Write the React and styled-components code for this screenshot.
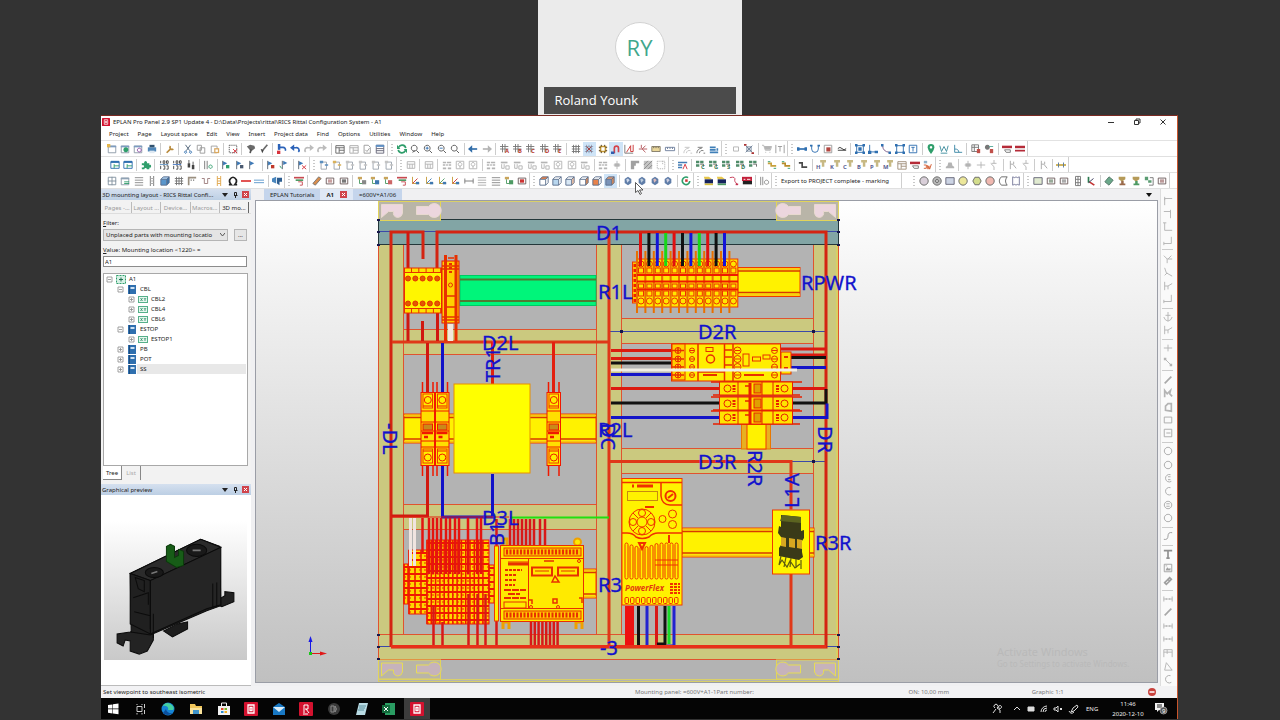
import React, { useState } from "react";
import styled, { createGlobalStyle } from "styled-components";

const RED = "#d8323c";
const BLUE = "#2f6fb0";
const GREEN = "#2f9e6b";
const GRAY = "#b4b4b4";
const DARK = "#4a4a4a";

// Toolbar glyphs on a 12x12 grid: [kind, colour, path] with s = stroke, f = fill, t = letter
const page = (c) => [["s", "#8d99a6", "M1.5 2.5h9v8h-9z"], ["f", c || "#8d99a6", "M1 2h10v2h-10z"]];
const flag = (c) => [["s", "#56616e", "M2 1v10"], ["f", "#3d78b5", "M2.5 1.5l5 2.5l-5 2.5z"], ["f", c || "#4a5a70", "M6 6h4v4h-4z"]];
const hash = (c) => [["s", c || "#777", "M3 1v10M6 1v10M9 1v10M1 3h10M1 6h10M1 9h10"]];
const cube = (top, front, side) => [
  ["f", top || "#fff", "M1 4l3-3h7l-3 3z"],
  ["f", front || "#fff", "M1 4h7v7h-7z"],
  ["f", side || "#fff", "M8 4l3-3v7l-3 3z"],
  ["s", "#5a6f8c", "M1 4l3-3h7v7l-3 3h-7zM1 4h7v7M8 4l3-3"],
];
const lens = "M5 1.5a3.5 3.5 0 1 0 .1 0zM7.6 7.6l3.2 3.2";

const GLYPHS = {
  page,
  star: () => [...page("#7d9cc0"), ["f", "#e5b64c", "M0 0h4v4h-4z"]],
  open: () => [...page("#7d9cc0"), ["f", GREEN, "M7 4a3 3 0 1 0 .1 0z"]],
  close: () => [...page("#7d9cc0"), ["s", "#8e4fa8", "M7.5 5a2.3 2.3 0 1 0 .1 0z"]],
  printer: () => [["f", "#4f86b8", "M1 4h10v5h-10z"], ["f", "#dfe9f2", "M3 8h6v3h-6z"], ["f", "#31526f", "M3 1h6v3h-6z"]],
  wrench: () => [["s2", "#b88a3c", "M2 10.5l5-5"], ["s2", "#b88a3c", "M6.5 2.5a2.5 2.5 0 0 0 3.5 3.5"]],
  cut: () => [["s", "#4b5f74", "M3 1l5 7M9 1l-5 7"], ["s", BLUE, "M3 8.5a1.3 1.3 0 1 0 .1 0zM9 8.5a1.3 1.3 0 1 0 .1 0z"]],
  copy: (c) => [["s", c || "#9a9a9a", "M1.5 1.5h5v6h-5zM5 4.5h5.5v6.5h-5.5z"]],
  paste: () => [["s", "#a0a0a0", "M1.5 2.5h7v8h-7z"], ["f", "#d9a860", "M5 5h6v6h-6z"], ["f", "#fff", "M6.5 6.5h3v3h-3z"]],
  del: () => [["d", "#555", "M1.5 1.5h9v9h-9z"], ["s", RED, "M6 6l5 5M11 6l-5 5"]],
  brush: () => [["f", "#6a6a6a", "M1 3l4-2l5 1l1 3l-5 4z"], ["s2", "#555", "M6 6l-1 5"]],
  brush2: () => [["s2", "#6a6a6a", "M10 1l-5 6"], ["f", "#444", "M2 6l4 1l-2 4z"]],
  undo: (c) => [["s2", c || "#2b62b8", "M3 4.5h4a3 3 0 0 1 3 5"], ["f", c || "#2b62b8", "M0 4.5l5-4v8z"]],
  undoStart: () => [["s2", "#2b62b8", "M3 4h4a3 3 0 0 1 3 4"], ["f", "#2b62b8", "M1 0h3v7h-3z"], ["f", RED, "M0 8h4v4h-4z"]],
  redo: () => [["s2", "#bcbcbc", "M9 4.5h-4a3 3 0 0 0-3 5"], ["f", "#bcbcbc", "M12 4.5l-5-4v8z"]],
  window: (c) => [["s", c || "#666", "M1 2h10v9h-10zM1 4.5h10M5 4.5v6M5 7.5h6"]],
  doc: (c) => [["s", c || "#9a9a9a", "M2.5 1.5h5l2.5 2.5v7h-7.5zM4 7l2 2l3-4"]],
  list: (c) => [["s", c || "#667", "M1.5 1.5h9v9.5h-9zM1.5 5.5h9M1.5 8h9"], ["f", "#5f8fc4", "M1 1h10v2.5h-10z"]],
  refresh: () => [["s2", GREEN, "M10.5 5a4.5 4.5 0 0 0-8.5-1M1.5 7a4.5 4.5 0 0 0 8.5 1"], ["f", GREEN, "M0 1v5h4zM12 11v-5h-4z"]],
  lens: () => [["s", "#555", lens]],
  lensHand: () => [["s", "#555", lens], ["s", "#555", "M3 10l3-2"]],
  lensPlus: () => [["s", "#555", lens], ["s", BLUE, "M3.2 5h3.6M5 3.2v3.6"]],
  lensMinus: () => [["s", "#555", lens], ["s", BLUE, "M3.2 5h3.6"]],
  back: () => [["s2", "#336ea9", "M3 6h8"], ["f", "#336ea9", "M0 6l5-4.5v9z"]],
  next: () => [["s2", GRAY, "M1 6h8"], ["f", GRAY, "M12 6l-5-4.5v9z"]],
  grid: (l) => [["s", "#777", "M3 0v10M6 0v10M0 3h10M0 6h10"], ["t", "#b9352b", l]],
  hash,
  snap: () => [...hash("#8fa3bb"), ["s", "#a33a3a", "M3 3l6 6M9 3l-6 6"]],
  orangeGrid: () => [["s2", "#c79a35", "M3 3h6v6h-6z"], ["s", "#4a3a20", "M1 4h2M9 4h2M1 8h2M9 8h2M4 1v2M8 1v2M4 9v2M8 9v2"]],
  magnet: () => [["s2", "#d5424a", "M4 11v-6a2.5 2.5 0 0 1 5 0v5"], ["f", "#2f5fae", "M0 9h4v3h-4z"]],
  magnetLine: () => [["s", "#777", "M1 1v10h10"], ["s", "#c33", "M3 10l5-8v7h3v-8"]],
  branch: () => [["s", "#b3555a", "M1 6h10M5 6l4-4M5 6l4 4M4 1v4"]],
  ruler: (c) => [["f", c || "#ead79a", "M1 3h10v6h-10z"], ["s", "#827b68", "M1 3h10v6h-10zM3 3v2M5 3v2M7 3v2M9 3v2"]],
  ruler2: () => [["s", "#6d7f9c", "M.5 4h11v4h-11zM3 4v2M6 4v2M9 4v2"]],
  signal: (c) => [["s", c || "#c4c4c4", "M1 11a6 6 0 0 1 6-6M4 11a4 4 0 0 1 5-3M2 4h6M9 11h2"]],
  tableBlue: () => [["f", "#3f7fb8", "M1 3h7v2h-7zM1 6h7v2h-7zM1 9h10v2h-10zM9 5h2v3h-2z"]],
  box: (c) => [["s", c || GRAY, "M3 3.5h6v5h-6z"]],
  nodes: () => [["s", "#6b7f96", "M2 2l8 8M10 2l-8 8M3.5 3.5h5v5h-5z"], ["f", "#a33", "M0 0h3v2h-3zM9 10h3v2h-3z"]],
  cart: () => [["s", GRAY, "M0 1.5h2l2 6h6l1.5-4.5h-9M4 10h1M9 10h1"], ["f", GRAY, "M3 3h8l-1 4h-6z"]],
  text: (c) => [["s", c || "#999", "M1 1v10M11 1v10M3.5 3h5M6 3v6"]],
  line: () => [["s2", BLUE, "M1 6h10"], ["f", BLUE, "M0 4h3v4h-3zM9 4h3v4h-3z"]],
  bend: () => [["s", BLUE, "M2 2v4a4 4 0 0 0 8 0v-4"], ["f", BLUE, "M0 1h3v2h-3zM9 1h3v2h-3z"]],
  redFrame: () => [["s", "#999", "M1.5 1.5h9v9h-9z"], ["f", "#b3453f", "M4 4h5v5h-5z"]],
  wave: () => [["s", "#333", "M1 5.5q2.5-3 5 0t5 0M1 7.5h10"]],
  frame: () => [["s", BLUE, "M2 2h8v8h-8z"], ["f", BLUE, "M0 0h3v3h-3zM9 0h3v3h-3zM0 9h3v3h-3zM9 9h3v3h-3zM4 4h4v4h-4z"]],
  corner: () => [["s", BLUE, "M2 1v8.5h9"], ["f", BLUE, "M0 8h4v4h-4zM8 8h4v3h-4z"]],
  curve: () => [["s", "#7a5a88", "M2 2q0 7 8 8"], ["f", BLUE, "M0 0h3v3h-3zM9 9h3v3h-3z"]],
  square: () => [["s", BLUE, "M2 2h8v8h-8z"], ["f", BLUE, "M0 0h3v3h-3zM9 0h3v3h-3zM0 9h3v3h-3zM9 9h3v3h-3z"]],
  textFrame: () => [["s", BLUE, "M1.5 1.5h9v9h-9zM4 4h4M6 4v5"]],
  pin: () => [["f", GREEN, "M6 0a4 4 0 0 1 4 4q0 3-4 8q-4-5-4-8a4 4 0 0 1 4-4z"], ["f", "#fff", "M6 2.5a1.5 1.5 0 1 0 .1 0z"]],
  omegaBlue: () => [["s", "#3d8c9c", "M1 2l2 7l3-6l3 6l2-7M2 11h8"]],
  angle: () => [["s", "#3b87a5", "M2 1v9h9M2 6q5 0 5 4"]],
  gridDoc: () => [["s", "#777", "M1 1h8v8h-8zM4 1v8M1 4h8"], ["f", "#c0504a", "M7 6h4v5h-4z"]],
  gearDoc: () => [["f", "#777", "M4 1a3 3 0 1 0 .1 0z"], ["f", "#c0504a", "M7 6h4v5h-4z"], ["s", "#5a9", "M6 3h5"]],
  redBars: () => [["f", "#b52b38", "M0 2h12v3h-12z"], ["s", "#777", "M3 7h7v3h-5z"]],
  redFlag: () => [["f", "#b52b38", "M0 2h12v3h-12zM0 7h12v2h-12z"], ["f", "#e9dada", "M0 5h12v2h-12z"]],
  winArrow: () => [["s", BLUE, "M1 2h10v8h-10z"], ["f", BLUE, "M1 1h10v2.5h-10z"], ["s", GREEN, "M5 7h6M5 5v5"]],
  puzzle: () => [["f", GREEN, "M1 4h3a1.8 1.8 0 1 1 3 0h3v2a1.6 1.6 0 1 1 0 3v2h-3a1.5 1.5 0 1 0-3 0h-3v-2.5a1.5 1.5 0 1 0 0-2z"]],
  digits: (c) => [["s", "#444", "M2 1v3M5 1h2v3h-2zM9 1h2v3h-2zM2 7v4M5 7h2v4h-2M9 7h2v4h-2"], ["f", c || "#5a8fc0", "M1 5h10v1h-10z"]],
  plugs: () => [["s", "#555", "M3.5 0v4M8.5 2v4"], ["f", "#444", "M2 4h3v5h-3zM7 6h3v5h-3z"]],
  barsDot: () => [["s", "#777", "M2 1v10M5 1v10"], ["s", GREEN, "M9 6a2 2 0 1 0 .1 0z"]],
  flag,
  flagCheck: () => [["s", "#56616e", "M4 1v10"], ["f", "#3d78b5", "M5 1l5 2.5l-5 2.5z"], ["s", GREEN, "M1 7l2 3"]],
  flagX: () => [["s", "#56616e", "M2 1v10"], ["f", "#3d78b5", "M2.5 1.5l5 2.5l-5 2.5z"], ["s", RED, "M6 6.5l5 4.5M11 6.5l-5 4.5"]],
  sheet: (c) => [["s", "#9aa3ad", "M2.5 2.5h6.5v8.5h-6.5z"], ["f", c || "#c4c4c4", "M1 1h4v3h-4zM7 5h4v2h-4z"]],
  grayTable: () => [["s", GRAY, "M1.5 2h9v8h-9zM1.5 5h9M4.5 5v5M7.5 5v5"]],
  grayBlocks: () => [["f", GRAY, "M1 2h4v2h-4zM6 2h5v2h-5zM1 5h3v2h-3zM5 5h2v2h-2zM8 5h3v2h-3zM1 9h4v2h-4zM7 9h4v2h-4z"]],
  grayTag: () => [["f", GRAY, "M1 2h8v2h-8z"], ["s", GRAY, "M2 5v5h3v-5M7 7h4v4h-4z"]],
  grayLamp: () => [["s", GRAY, "M1.5 1.5h9v9h-9zM6 3a2.2 2.2 0 1 0 .1 0zM6 7v3"]],
  grayHatch: () => [["f", "#c4c4c4", "M1 1h10v10h-10z"], ["s", "#8a8a8a", "M1 6l5-5M1 11l10-10M6 11l5-5"]],
  grayCorner: () => [["f", "#a0a0a0", "M1 1h10v3h-4v3h-2v4h-4z"]],
  grayPlus: () => [["s", GRAY, "M6 1v10M2 6h8"], ["f", GRAY, "M3 4h6v4h-6z"]],
  grayDash: () => [["d", GRAY, "M1.5 1.5h9v9h-9zM8 1v4"]],
  tableA: () => [["f", "#447db5", "M0 2h11v2h-11zM0 5h5v2h-5zM0 8h5v2h-5z"], ["s", RED, "M6 11l2.5-6l2.5 6"]],
  greenTable: (l) => [["f", "#508c6a", "M0 1h4v3h-4zM5 1h4v3h-4zM0 5h4v3h-4z"], ["s", "#666", "M5 5h4v3"], ["t", "#3b7d58", l]],
  wire: (c) => [["s2", c || "#c7a13d", "M1 4h4v3h6"], ["s", GREEN, "M1 2h3M8 10h3"]],
  step: () => [["s2", DARK, "M1 3.5h4v5h6"]],
  funnel: (l) => [["f", "#c7b984", "M5 0h7v3h-2v5h-3v-5h-2z"], ["t2", "#5b5f92", l]],
  sw: () => [["f", "#8fb0c8", "M1 1h4v3h-4z"], ["s", "#d25b2f", "M1 6h3v4h-3M5 6l1 5l1-4l1 4l2-6"]],
  hat: () => [["f", GRAY, "M1 8l2-1l1-4h4l1 4l2 1v2h-10z"]],
  contact: () => [["s", GRAY, "M6 0v4M6 8v4M3 4h6M6 8l-4-4"]],
  relay: () => [["s", "#a6a6a6", "M4 1v10M4 5h3l4 5M8 2v3"]],
  yellowBar: () => [["s2", "#c7a640", "M0 6h12"], ["s", "#56789c", "M3 3v6M9 3v6"]],
  frameGrid: () => [["s", "#81909e", "M1.5 1.5h9v9h-9zM6 1v10M1 6h10"]],
  greenList: () => [...page("#8fa2b4"), ["s", GREEN, "M5 7h6M5 9h6"]],
  rows: (c) => [["s", c || "#8a8a8a", "M1 2h10M1 5h10M1 8h10M1 11h10"]],
  rack: (c) => [["s", c || "#777", "M4 0v12M8 0v12"], ["s", c || "#aaa", "M4 3h4M4 6h4M4 9h4"]],
  cubeBlue: () => cube("#a9cdee", "#5a96cc", "#3b74ab"),
  bracket: () => [["s2", "#9a8f80", "M2 11v-9h9"], ["s", "#777", "M5 4v2M8 4v2"]],
  cup: () => [["s", "#9c7d7d", "M1 3h3v6h4v-6h3"]],
  omega: () => [["s2", "#222", "M1 10.5h3q-3-3-2-6q4-6 8 0q1 3-2 6h3"]],
  dash: (c) => [["s2", c || "#d33", "M0 6h12"]],
  dashBlue: () => [["s", "#5a96cc", "M0 5h12M0 8h12"]],
  cubeArrow: () => [["f", "#4a86bd", "M0 3l5-2v8l-5-2z"], ["f", "#2d5d8f", "M6 2h6v5h-3v4l-3-2z"]],
  stack: () => [["f", "#c74a50", "M0 1h12v2h-12z"], ["f", "#4e9a63", "M2 4h9v2h-9z"], ["s", "#c74a50", "M5 7h5v4h-3"]],
  eraser: () => [["f", "#d98d4c", "M1 9l7-8l3 2l-7 8z"], ["s", "#777", "M1 9l7-8l3 2l-7 8z"]],
  chip: (c) => [["s", "#6c5b5b", "M1.5 2.5h9v7h-9z"], ["f", c || "#c9a0a0", "M3.5 4h5v4h-5z"]],
  combo: (c) => [["f", "#c9a45b", "M1 1h5v3h-5z"], ["s", "#4e9a63", "M3 4v5h5"], ["f", c || "#888", "M6 5h5v5h-5z"]],
  axes: (c) => [["s", "#c79b3a", "M3 1v8h8"], ["s", c || "#c33", "M3 9l6-6"], ["f", "#3f78b0", "M7 7h4v3h-4z"]],
  span: () => [["s", "#777", "M1 3v6M11 3v6M1 6h10"]],
  cubeTop: () => cube("#e8824a"),
  cubeBottom: () => cube("#fff", "#b8d6ee"),
  cubeLeft: () => cube("#fff", "#d9e8f5", "#f7c7a8"),
  cubeRight: () => cube("#fff", "#fff", "#d98a58"),
  cubeFront: () => cube("#fff", "#e8824a"),
  cubeBack: () => cube("#e09a73", "#7a93b8", "#d98a58"),
  ball: (c) => [["f", "#5f7da8", "M6 1l4 2.5v5l-4 2.5l-4-2.5v-5z"], ["f", c || "#cfd9ea", "M4 4l2-1l2 2l-3 3z"]],
  spin: () => [["s2", GREEN, "M10.5 6a4.5 4.5 0 1 1-2-4"], ["f", "#c33", "M5 4h3v3h-3z"]],
  folder: (c) => [["f", "#e6c64c", "M1 1h6l4 3h-9z"], ["f", "#16235e", "M2 4h10v5h-10z"], ["f", c || "#d8c040", "M2 9h10v2h-10z"]],
  redCurve: () => [["s", "#c33350", "M1 2q7-2 6 3q-1 1 3 5"], ["f", "#c33350", "M8 9h3v2h-3z"]],
  bom: () => [["f", "#c3203a", "M0 1h12v5h-12z"], ["f", "#222", "M1 6h11v4h-11z"], ["s", "#fff", "M2 4h2M6 4h4"]],
  barCircle: () => [["s", "#888", "M2 1v10M4.5 1v10M9 5a2.5 2.5 0 1 0 .1 0z"]],
  circle: (c) => [["f", c, "M6 1a5 5 0 1 0 .1 0z"], ["s", "#666", "M6 1a5 5 0 1 0 .1 0z"]],
  ring: () => [["f", "#bbb", "M6 1a5 5 0 1 0 .1 0z"], ["s", "#666", "M6 1a5 5 0 1 0 .1 0zM6 4a2 2 0 1 0 .1 0z"]],
  rect: (c) => [["f", c, "M1 2h10v8h-10z"], ["s", "#667", "M1 2h10v8h-10z"]],
  hex: (c) => [["f", c, "M3.5 1.5h5l2.5 4.5l-2.5 4.5h-5l-2.5-4.5z"], ["s", "#666", "M3.5 1.5h5l2.5 4.5l-2.5 4.5h-5l-2.5-4.5z"]],
  moon: () => [["s", "#666", "M4 1h7q-4 5 0 10h-7q-5-5 0-10z"]],
  saddle: () => [["s", "#77799a", "M2 1q3 2 4 0q1 2 4 0v10q-3-2-4 0q-1-2-4 0z"]],
  miniGrid: () => [["s", "#777", "M3 .5h6v11h-6zM6 0v12M3 4h6M3 8h6"]],
  axisRG: () => [["s2", "#c23434", "M4 7l6 4"], ["s2", "#2c7a4f", "M3 1v7"], ["s", "#335", "M3 8l6-5"]],
  diamond: () => [["f", "#6aa88a", "M1 7l5-6l5 4l-5 6z"], ["s", "#58786a", "M1 7l5-6l5 4l-5 6z"]],
  trophy: (c) => [["f", "#b59a58", "M2 1h8v3l-3 2h-2l-3-2z"], ["f", c || "#9a6a4a", "M5 6h3v3h2v2h-7v-2h2z"]],
  blocksGreen: () => [["f", "#5a9c72", "M1 1h4v4h-4zM5 5h4v3h-4z"], ["s", "#777", "M7 2h4v9h-5"]],
  lineA: () => [["s", GRAY, "M2 11v-8h9M2 1v4"]],
  lineB: () => [["s", GRAY, "M1 3h8v8M9 1v4"]],
  lineC: () => [["s", GRAY, "M2 1v9h9M0 1h4"]],
  lineD: () => [["s", GRAY, "M1 9h9v-8M1 7v4"]],
  fork: () => [["s", GRAY, "M1 2l4 4h6M5 6v5M10 2l-4 4"]],
  fork2: () => [["s", GRAY, "M2 1l2 6l7 4M2 10l3-3"]],
  fork3: () => [["s", GRAY, "M2 1v10M2 6h4l5-3M6 6v4"]],
  arrowDown: () => [["s", GRAY, "M6 0v11M1 6q1 4 5 5q4-1 5-5M3 4h6"]],
  cross: () => [["s", GRAY, "M1 6h10M6 2v8"]],
  slash: (c) => [["s2", c || "#a8a8a8", "M2 10l8-8"]],
  backslash: () => [["s", GRAY, "M2 2l8 8"], ["f", GRAY, "M1 1h3v3h-3zM8 8h3v3h-3z"]],
  zig: () => [["s2", GRAY, "M2 11v-8l3 4l4-4l-1 4l3 3"]],
  poly: () => [["s2", GRAY, "M3 10v-5l3-3h4v9z"]],
  rectGray: () => [["s", "#a8a8a8", "M1.5 2.5h9v7h-9z"]],
  rectDot: () => [["s", "#a8a8a8", "M1.5 1.5h9v9h-9zM4 6h5"]],
  ringGray: () => [["s", "#a8a8a8", "M6 1.5a4.5 4.5 0 1 0 .1 0z"]],
  ringDot: () => [["s", "#a8a8a8", "M6 1.5a4.5 4.5 0 1 0 .1 0zM4 4.5h4M4 7.5h4"]],
  arc: () => [["s", "#a8a8a8", "M9 2a4.5 4.5 0 1 0 1 8"]],
  arcDot: () => [["s", "#a8a8a8", "M9 2a4.5 4.5 0 1 0 1 8M6 4.5h3M6 8h3"]],
  spline: () => [["s", "#999", "M1 10q5 1 5-4t5-4"]],
  bigT: () => [["s2", "#909090", "M1 2h10M6 2v9M4 11h4"]],
  picture: () => [["s", "#a0a0a0", "M1.5 1.5h9v9h-9z"], ["f", "#a0a0a0", "M3 9l2-4l2 2l2-1v3zM3 3h2v1h-2z"]],
  clip: () => [["s2", "#a0a0a0", "M2 8l4-4l2 2l-4 4zM5 5l3-3l2 2l-3 3"]],
  dim: () => [["s", GRAY, "M1 3v6M11 3v6M1 6h10M4 5v2M8 5v2"]],
  dimBox: () => [["s", GRAY, "M1 11v-9h10v9M1 5h10M5 2v5"]],
  triangle: () => [["s", GRAY, "M2 11l2-9l7 9z"]],
};

const TOOLBARS = [
  {
    indent: 4,
    bars: [
      { width: 283, label: "Default", items: "star open close printer | wrench | cut copy paste | del | brush brush2 | undoStart undo redo redo | window window:#aaa doc list" },
      { width: 327, label: "View", items: "refresh lensHand lensPlus lensMinus lens | back next | grid:A grid:B grid:C grid:D grid:E | hash *snap orangeGrid *magnet magnetLine branch ruler ruler2 | signal signal:#777 tableBlue" },
      { width: 59, label: "Placement", items: "box nodes | cart text" },
      { width: 233, label: "Edit", items: "line bend redFrame wave | frame corner curve square textFrame | pin omegaBlue angle | gridDoc gearDoc | redBars redFlag" },
    ],
  },
  {
    indent: 7,
    bars: [
      { width: 202, label: "Project data", items: "winArrow winArrow | puzzle | digits digits:#3a6fc0 plugs | barsDot | flag:#2f9e6b flag flag:#fff | flag:#c0392b flagCheck | flagX" },
      { width: 80, label: "Pages", items: "sheet:#5a8fc0 sheet:#d9b25c sheet sheet sheet sheet" },
      { width: 265, label: "Devices", items: "grayTable | grayTable | grayBlocks grayLamp grayLamp | grayBlocks grayTag grayTag grayTag grayTag grayLamp grayLamp grayTag | grayBlocks grayPlus | grayCorner grayHatch grayDash" },
      { width: 260, label: "Connections", items: "tableA | greenTable:C greenTable:G greenTable:S greenTable:D greenTable | wire wire:#b98d2a | step | funnel:H funnel:K funnel:C funnel:B funnel:P funnel:M window:#a08f7c redBars sw" },
      { width: 126, label: "Symbols", items: "hat | grayPlus cross contact | relay contact | relay | yellowBar" },
    ],
  },
  {
    indent: 4,
    bars: [
      { width: 180, label: "Layout space", items: "frameGrid greenList rows rack cubeBlue hash bracket cup rack:#e0a64c omega dash dashBlue | cubeArrow" },
      { width: 238, label: "Placement options", items: "stack | eraser chip chip:#777 | combo combo:#3f78b0 combo:#c66 stack axes axes:#3f78b0 axes:#4e9a63 axes span rows:#aaa rows combo:#4e9a63 chip:#c33" },
      { width: 157, label: "3D viewpoint", items: "cubeTop cubeBottom cubeLeft cubeRight cubeFront *cubeBack | ball ball:#bcd ball:#dbb ball:#ccd | spin" },
      { width: 71, label: "Scripts", items: "folder folder:#4e9a63 redCurve bom | barCircle" },
      { width: 123, label: "Export", text: "Export to PROJECT complete - marking" },
      { width: 107, label: "Shapes", wide: true, items: "circle:#d9cfd9 ring rect:#ccd4e4 circle:#ece79a hex:#d3dd8c circle:#f0b8b0 moon saddle" },
      { width: 139, label: "Panel", items: "rect:#e0ead0 chip:#9a9 chip:#aaa miniGrid axisRG | diamond trophy trophy:#4e9a63 blocksGreen chip:#b99" },
    ],
  },
];

const SIDE_TOOLS =
  "lineA lineB lineC lineD | fork fork2 fork3 lineD | arrowDown fork3 | cross backslash | slash zig poly rectGray rectDot | ringGray ringGray arcDot arc ringDot ringGray | spline | bigT picture clip | dim slash dim dim dimBox triangle arc";

const MENUS = ["Project", "Page", "Layout space", "Edit", "View", "Insert", "Project data", "Find", "Options", "Utilities", "Window", "Help"];
const DOCK_TABS = ["Pages -...", "Layout ...", "Device...", "Macros...", "3D mo..."];

const TREE = [
  { label: "A1", level: 0, kind: "root", open: true },
  { label: "CBL", level: 1, kind: "book", open: true },
  { label: "CBL2", level: 2, kind: "part" },
  { label: "CBL4", level: 2, kind: "part" },
  { label: "CBL6", level: 2, kind: "part" },
  { label: "ESTOP", level: 1, kind: "book", open: true },
  { label: "ESTOP1", level: 2, kind: "part" },
  { label: "PB", level: 1, kind: "book" },
  { label: "POT", level: 1, kind: "book" },
  { label: "SS", level: 1, kind: "book" },
];

const Glyph = ({ spec }) => {
  const [name, arg] = spec.split(":");
  return (
    <GlyphSvg viewBox="0 0 12 12" aria-hidden="true">
      {GLYPHS[name](arg).map(([kind, color, d], i) => {
        if (kind === "t" || kind === "t2") {
          if (!d) return null;
          return (
            <text key={i} x={kind === "t" ? 6 : 0} y="11" fontSize="7" fontWeight="700" fill={color}>
              {d}
            </text>
          );
        }
        if (kind === "f") return <path key={i} d={d} fill={color} />;
        return (
          <path
            key={i}
            d={d}
            fill="none"
            stroke={color}
            strokeWidth={kind === "s2" ? 2 : 1.1}
            strokeDasharray={kind === "d" ? "1.5 1" : undefined}
          />
        );
      })}
    </GlyphSvg>
  );
};

const ToolItems = ({ items, vertical }) =>
  items.split(" ").map((item, i) =>
    item === "|" ? (
      <Separator key={i} $vertical={vertical} />
    ) : (
      <ToolButton key={i} aria-label={item.replace("*", "").split(":")[0]} $active={item[0] === "*"}>
        <Glyph spec={item.replace("*", "")} />
      </ToolButton>
    )
  );

const range = (n) => Array.from({ length: n }, (_, i) => i);

const Wire = ({ d, c = "#e3200f", w = 3 }) => <path d={d} fill="none" stroke={c} strokeWidth={w} />;

const Part = ({ x, y, w, h, fill = "#ffee00", stroke = "#f03a00" }) => (
  <rect x={x} y={y} width={w} height={h} fill={fill} stroke={stroke} />
);

const Rail = ({ x, y, w, h = 29 }) => (
  <g>
    <Part x={x} y={y} w={w} h={h} fill="#fff200" />
    <path d={`M${x} ${y + 1.5}h${w}M${x} ${y + h - 1.5}h${w}`} stroke="#f8c416" strokeWidth="1.5" />
    <path d={`M${x} ${y + 3.5}h${w}M${x} ${y + h - 4}h${w}`} stroke="#d83a00" strokeWidth="1.5" />
  </g>
);

const Breaker = ({ x }) => (
  <g stroke="#f01800" fill="none">
    <path d={`M${x + 1.5} 382v12M${x + 12} 382v12M${x + 1.5} 464v12M${x + 12} 464v12`} strokeWidth="1.5" />
    <Part x={x} y={392.5} w={13.5} h={73} fill="#ffdf00" stroke="#f01800" />
    <Part x={x + 2} y={394} w={9.5} h={14} />
    <Part x={x + 2} y={449} w={9.5} h={14} />
    <circle cx={x + 6.8} cy="400" r="3.5" />
    <circle cx={x + 6.8} cy="457.5" r="3.5" />
    <path d={`M${x} 411h13.5M${x} 422h13.5M${x} 431h13.5M${x} 441h13.5M${x} 447h13.5M${x + 2} 406h9M${x + 2} 451h9`} />
    <rect x={x + 2} y="424" width="9.5" height="6" fill="#c98a1a" />
    <path d={`M${x + 1} 433h11M${x + 3} 437h4`} strokeWidth="2.5" />
  </g>
);

const Bracket = ({ flip, bottom }) => {
  const fill = bottom ? "#c6b3bb" : "#ecd6de";
  const edge = bottom ? "#e6dc55" : "#e8d9cf";
  return (
    <g transform={`translate(${flip ? 838.5 : 378.5} ${bottom ? 660 : 201.5}) scale(${flip ? -1 : 1} 1)`}>
      <rect width="62" height="19" fill="#b9b5a8" stroke="#e2d45a" />
      <path d="M3 3h21v9q-1 4-5 4q-5-1-4-6h-5l-7 6z" fill={fill} stroke={edge} />
      <path d="M38 5h12a7 7 0 1 1 0 8h-12z" fill={fill} stroke={edge} />
    </g>
  );
};

const WIRE_COLORS = ["#e01010", "#111", "#1414d8", "#18d818"];

const TerminalStrip = () => (
  <g>
    <Part x={632.5} y={262} w={5} h={41} fill="#ffc400" />
    <path d="M635 264v38" stroke="#f02000" strokeWidth="3" strokeDasharray="3 2" />
    {range(12).map((i) => (
      <g key={i} stroke="#f03000" fill="none">
        <Part x={637 + i * 8.4} y={259} w={8.4} h={48} fill="#ffe600" />
        <circle cx={641 + i * 8.4} cy="264" r="3" />
        <circle cx={641 + i * 8.4} cy="301" r="3" />
        <rect x={638.5 + i * 8.4} y="268" width="5" height="5" />
        <rect x={638.5 + i * 8.4} y="284" width="5" height="4" />
        <rect x={638.5 + i * 8.4} y="291" width="5" height="5" />
        <path d={`M${637 + i * 8.4} 251v62`} stroke="#e87000" strokeWidth="2" />
      </g>
    ))}
    <path d="M637 275h101M637 281.5h101M637 289.5h101" stroke="#f01800" strokeWidth="2" />
    {range(11).map((i) => (
      <Wire key={i} d={`M${640.5 + i * 8.4} 233v33`} c={i < 4 ? WIRE_COLORS[i] : WIRE_COLORS[(i - 4) % 4]} />
    ))}
  </g>
);

const TerminalBlock = ({ x, y, w, h, step }) => {
  const cols = range(Math.floor(w / step));
  const rows = range(Math.floor(h / 7));
  return (
    <g>
      <Part x={x} y={y} w={w} h={h} fill="#ffd500" stroke="#f01800" />
      <path d={cols.map((i) => `M${x + i * step} ${y}v${h}`).join("")} stroke="#f01800" strokeWidth="1.5" />
      <path d={rows.map((i) => `M${x} ${y + i * 7 + 3}h${w}`).join("")} stroke="#f01800" strokeWidth="2" />
      <path d={rows.map((i) => `M${x} ${y + i * 7 + 6}h${w}`).join("")} stroke="#f02800" strokeWidth="1" strokeDasharray="2 3" />
    </g>
  );
};

const Drive = () => (
  <g fill="none" stroke="#f03000">
    <Part x={622} y={478.5} w={60} h={126.5} fill="#fff200" />
    <path d="M622 482.5h60M661 482v14q1 9 9 9h12M622 533h5q6 0 9 4q6 3 13 0q4-4 9-4h24" strokeWidth="1.5" />
    <path d="M632 486h2M637 486h16" strokeWidth="3" />
    <rect x="627.5" y="491.5" width="30" height="9" stroke="#c78a10" />
    <circle cx="670.5" cy="496" r="5" strokeWidth="2" />
    <path d="M668 498l5-4" strokeWidth="2" />
    <circle cx="642" cy="522" r="13" />
    {range(4).map((i) => {
      const a = (i * Math.PI) / 2;
      return <circle key={i} cx={642 + 9 * Math.cos(a)} cy={522 + 9 * Math.sin(a)} r="3.5" />;
    })}
    <path d="M633 513l5 5M651 513l-5 5M633 531l5-5M651 531l-5-5" />
    <circle cx="642" cy="522" r="5" />
    <circle cx="662.5" cy="519" r="3.5" />
    <circle cx="672.5" cy="514" r="4" />
    <circle cx="672.5" cy="524.5" r="4" />
    <path d="M645 507h9M669 543v-8M639 543h6l-3 6z" strokeWidth="2" />
    {range(11).map((i) => (
      <rect key={i} x={625 + i * 5} y={i < 7 ? 543 + 4 * Math.sin(i / 2) : 543} width="3" height={i < 7 ? 36 - 4 * Math.sin(i / 2) : 36} rx="1.5" />
    ))}
    <path d="M655 560h23M655 565h23" />
    <text x="625" y="591" fontSize="8" fontWeight="700" fontStyle="italic" fill="#e33a10" stroke="none">
      PowerFlex
    </text>
    <path d="M670 584h10M670 587h10M670 590h10M670 593h10" strokeWidth="2" strokeDasharray="3 1" />
    {range(10).map((i) => (
      <rect key={i} x={625 + i * 5.5} y="597.5" width="3.5" height="6" rx="1" />
    ))}
  </g>
);

const Controller = () => (
  <g fill="none" stroke="#e83000">
    <path d="M503 545v-6h4v6M503 629v-7h6v7M576 629v-7h6v7" strokeWidth="3" stroke="#f0a000" />
    <circle cx="577.5" cy="542" r="3.5" fill="#ffea00" stroke="#f0a000" strokeWidth="2" />
    <Part x={500.5} y={545.5} w={83} h={76} fill="#ffea00" stroke="#e83000" />
    <rect x="504" y="548" width="77" height="8" fill="#ffc400" />
    <rect x="504" y="611" width="77" height="8" fill="#ffc400" />
    <path d="M506 552h73M506 615h73" strokeWidth="5" strokeDasharray="2 1.5" />
    <path d="M500 558.5h83M500 608.5h83M528.5 558v50M508 562h20" />
    <path d="M508 564h20" strokeWidth="3" />
    <path d="M505 570h17M505 575h12M505 580h12M505 585h10" strokeDasharray="3 1" strokeWidth="2" />
    <path d="M504 590h22M508 594h12M504 598h22" strokeWidth="2" strokeDasharray="7 1" />
    <rect x="504" y="602" width="22" height="6" />
    <rect x="532" y="567.5" width="20" height="8" strokeWidth="2" />
    <rect x="558" y="567.5" width="20" height="8" strokeWidth="2" />
    <path d="M535 571h14M561 571h14" />
    <path d="M544 561h10M552 582l3-6l4 6zM553 599h4v4h-4zM529 600h3v4M579 598h3v5" strokeWidth="1.5" />
    <circle cx="579" cy="561" r="1.5" />
    <circle cx="531" cy="607" r="1.5" />
    <circle cx="558" cy="607" r="1.5" />
  </g>
);

const Contactor = () => (
  <g fill="none" stroke="#e83000">
    <Part x={671.5} y={344} w={109} h={37} fill="#ffee00" stroke="#e83000" />
    <Part x={781} y={352} w={10} h={22} fill="#ffe000" stroke="#e83000" />
    <rect x="672" y="344" width="13" height="36" fill="#ffd000" />
    {[350.5, 359, 367, 375].map((y) => (
      <g key={y}>
        <circle cx="678" cy={y} r="3" />
        <path d={`M672 ${y}h12M678 ${y - 3}v6`} strokeWidth="1.5" />
        <circle cx="692" cy={y} r="2.5" />
        <path d={`M689.5 ${y}h5`} />
        <circle cx="737.5" cy={y} r="3.5" />
        <path d={`M735 ${y}h5`} />
        <circle cx="774.5" cy={y} r="3" />
        <path d={`M772 ${y}h5`} />
      </g>
    ))}
    <path d="M698 344v37M724.5 344v37M733 344v37M698 372h26M724 350h8M724 357h8M724 365h8" strokeWidth="1.5" />
    <circle cx="710.5" cy="359" r="4" strokeWidth="1.5" />
    <rect x="706" y="347.5" width="7" height="4" />
    <rect x="743" y="354" width="6" height="12" />
    <rect x="752.5" y="357" width="8" height="4" />
    <rect x="763" y="355" width="7" height="4" />
    <path d="M703 375h14M744 375h20M784 357h4M784 368h4" strokeWidth="2" />
  </g>
);

const MotorBreaker = () => (
  <g fill="none" stroke="#e82000">
    {[382, 397, 411].map((y) => (
      <g key={y}>
        <path d={`M711 ${y}h91M713 ${y + 13}h87`} strokeWidth="1.5" />
        <Part x={719.5} y={y} w={73} h={13} fill="#ffe400" stroke="#e82000" />
        <circle cx="727.5" cy={y + 6.5} r="3.5" />
        <circle cx="784.5" cy={y + 6.5} r="3.5" />
        <path d={`M734 ${y + 3}v7M777.5 ${y + 3}v7`} strokeWidth="3" strokeDasharray="2 1" />
        <path d={`M738 ${y}v13M773 ${y}v13M762 ${y}v13`} />
        <rect x="754" y={y + 2} width="7" height="9" fill="#e0a000" />
        <path d={`M745 ${y + 4}h5v5`} strokeWidth="1.5" />
      </g>
    ))}
    <path d="M750 383v41" strokeWidth="3" />
  </g>
);

const LABELS = [
  ["D1", 596, 240], ["R1L", 598, 299], ["RPWR", 801, 290], ["D2R", 698, 339], ["D2L", 482, 350],
  ["R2L", 598, 437], ["D3R", 698, 469], ["D3L", 482, 525], ["R3", 598, 592], ["-3", 600, 655], ["R3R", 815, 550],
  ["-DL", 383, 423, 90], ["DC", 601, 423, 90], ["DR", 818, 426, 90], ["R2R", 748, 450, 90],
  ["TR1", 500, 382, -90], ["L1A", 799, 508, -90], ["B1", 504, 546, -90],
];

const PanelDrawing = () => (
  <DrawingSvg role="img" aria-label="Mounting panel A1">
    <g transform="translate(-256 -201)">
      <rect x="378.5" y="201.5" width="460" height="480" fill="#b3b3b3" stroke="#d9cf6a" />
      <path d="M378 679.5h461" stroke="#d9cf6a" />
      <g fill="#cbc97f" stroke="#e0532f">
        <rect x="378.5" y="244.5" width="25" height="390" />
        <rect x="596.5" y="244.5" width="25" height="390" />
        <rect x="813.5" y="244.5" width="25" height="390" />
        <rect x="403.5" y="329.5" width="193" height="25" />
        <rect x="403.5" y="504.5" width="193" height="25" />
        <rect x="621.5" y="318.5" width="192" height="25" />
        <rect x="621.5" y="448.5" width="192" height="25" />
        <rect x="378.5" y="634.5" width="460" height="25" />
      </g>
      <path d="M837 245v414" stroke="#e3d94a" />
      <rect x="378.5" y="219.5" width="460" height="25" fill="#82a5a5" stroke="#24373a" />
      <Bracket />
      <Bracket flip />
      <Bracket bottom />
      <Bracket flip bottom />
      <Wire d="M378 231.5h461M609 331.5h217M791 461.5h35M378 646.5h14M826 646.5h13" c="#3b49a8" w={1} />

      {/* field wiring */}
      <Wire d="M391 647v-415h32v27M437 270v-38h389v415h-435" c="#d42412" />
      <Wire d="M609 232v414M392 342h217M609 461.5h182v48M791 574v72" c="#e03818" />
      <Wire d="M408 232v38M408 312v29M422.5 321v20M437.5 312v29M427.5 343v50M427.5 465v51h-36" c="#d01810" />
      <Wire d="M492.5 342v42M553.5 342v50" />
      <Wire d="M442.5 343v50M442.5 465v52h50v-43" c="#1212c8" />
      <Wire d="M510 517.5h99" c="#20e010" w={2} />
      <Wire d="M391 517h118" w={1} />

      <Part x={460} y={275.5} w={136} h={30} fill="#00f57a" stroke="#00c864" />
      <path d="M460 279.5h136M460 301h136" stroke="#4f7a34" strokeWidth="2" />
      <g stroke="#e83000" fill="none">
        <Part x={404.5} y={268} w={37} h={45} fill="#ffe100" stroke="#e83000" />
        <Part x={404.5} y={272.5} w={37} h={36} fill="#fff600" stroke="#e83000" />
        {range(5).map((i) => (
          <g key={i} fill="#e05a00">
            <circle cx={408 + i * 7.3} cy="278.5" r="2.5" />
            <circle cx={408 + i * 7.3} cy="303.5" r="2.5" />
            <path d={`M${411.5 + i * 7.3} 268v4M${411.5 + i * 7.3} 309v4`} />
          </g>
        ))}
        <Part x={442} y={261} w={17} h={62} fill="#ffd000" stroke="#e81800" />
        <path d="M445.5 255v86M456 255v86" strokeWidth="3" />
        <path d="M442 266h17M442 269h17M447 296h8M447 307h8M442 317h17M442 320h17M448 258h6" strokeWidth="1.5" />
        <circle cx="450.5" cy="285" r="2" />
        <path d="M450.5 263v12" strokeWidth="3" strokeDasharray="2 2" />
        <path d="M450.5 324v17" stroke="#f3e8dc" strokeWidth="5" />
      </g>

      <Rail x={738} y={267.5} w={62} />
      <TerminalStrip />

      <Rail x={404} y={414} w={192} />
      <Breaker x={421} />
      <Breaker x={435.5} />
      <Breaker x={547} />
      <Part x={454} y={384} w={76} h={89} fill="#ffff00" stroke="#e89000" />

      <Wire d="M611 350.5h62M611 358.5h62M780 349h46M780 355h46M611 388.5h108M793 388.5h33" c="#dc1a10" />
      <Wire d="M611 363h62M780 357.5h46M611 403h108M793 403h33v-14" c="#111" />
      <Wire d="M611 374.5h62M780 367.5h46M611 417.5h108M793 417.5h34v-14" c="#1414c8" />
      <Part x={741.5} y={424} w={29} h={25} fill="#e8b020" stroke="#e87800" />
      <Part x={747} y={424} w={19} h={25} fill="#fff200" />
      <Contactor />
      <Wire d="M611 370h186" c="#f1eee4" w={3} />
      <MotorBreaker />

      <Rail x={682} y={528} w={132} />
      <Drive />
      <Wire d="M629.5 606v40" c="#ee1010" w={9} />
      <Wire d="M656.5 606v40" c="#d81818" />
      <Wire d="M638.5 606v40M665 606v38h-8" c="#111" />
      <Wire d="M647 606v40M674 606v40h-7" c="#2222d0" />
      <Wire d="M669 606v38" c="#18d828" />
      <Part x={772.5} y={510} w={37} h={64} fill="#fff600" />
      <path d="M781 515l20 2v14l3-1v8l-2 3v11l1 5l-4 3l-20-4v-8l2-3v-8l-3-4l1-7l2 1z" fill="#3a3a18" />
      <path d="M782 515l19 2v6l-21-2z" fill="#5c6420" />
      <path d="M781 537l5 1v9l-5-1zM789 538l6 1v9l-6-1zM797 539l5 1v9l-5-1z" fill="#d8a820" />
      <path d="M781 556l-2 9M786 557l-2 10M791 558l-1 9M796 559v9M801 560v9M779 565l3-5l5 7l3-6l5 7l5-4" stroke="#5c5a10" fill="none" strokeWidth="1.2" />

      <Rail x={583} y={569} w={13} />
      <TerminalBlock x={404} y={564} w={8} h={40} step={4} />
      <TerminalBlock x={409} y={550} w={18} h={64} step={6} />
      <TerminalBlock x={427} y={540} w={62} h={84} step={4.3} />
      <TerminalBlock x={489} y={565} w={5} h={38} step={3} />
      <Wire d="M410.5 518v48M414.5 518v48" c="#f0e4e0" />
      <Wire
        d={[429, 433, 437, 441, 446, 450, 455, 459, 468, 477, 481].map((x) => `M${x} 518v56`).join("") + "M422.5 518v34"}
        c="#e41410"
        w={2.5}
      />
      <Wire d="M433.5 606v40M442.5 622v24M468.5 594v52M477.5 594v52M485.5 594v52M496.5 621v25" c="#d81818" w={2.5} />
      <Wire d={range(7).map((i) => `M${510 + i * 4} 519v27`).join("") + "M540 519v27M545 519v27M496.5 519v27"} c="#d81818" w={2.5} />
      <Wire d={range(8).map((i) => `M${531 + i * 3.8} 622v24`).join("")} c="#d81818" w={2.5} />
      <Part x={494.5} y={546} w={4} h={75} fill="#fff200" />
      <Controller />
      <Wire d="M391 646.5h435" c="#e83018" />

      <g fill="#15154a">
        {[219, 231, 244, 634, 646, 658].map((y) => (
          <path key={y} d={`M377 ${y}h3v2h-3zM837 ${y}h3v2h-3z`} />
        ))}
        <path d="M620 330h3v3h-3zM812 330h3v3h-3zM812 460h3v3h-3z" />
      </g>

      <g fill="#1212cc" stroke="#1212cc" strokeWidth="0.3" fontSize="20" fontFamily='"Noto Sans", "Open Sans", sans-serif'>
        {LABELS.map(([label, x, y, turn]) => (
          <text key={label} transform={`translate(${x} ${y}) rotate(${turn || 0})`}>
            {label}
          </text>
        ))}
      </g>

      <path d="M310.5 653v-12" stroke="#1818e8" />
      <path d="M308.5 642l2-6l2 6z" fill="#1818e8" />
      <path d="M311 653.5h11" stroke="#e01818" />
      <path d="M320 651.5l7 2l-7 2z" fill="#e01818" />
      <rect x="309" y="652" width="3" height="3" fill="#18c818" />

      <g fill="#b9b9b9">
        <text x="997" y="656" fontSize="11">Activate Windows</text>
        <text x="997" y="667" fontSize="8">Go to Settings to activate Windows.</text>
      </g>
    </g>
  </DrawingSvg>
);

const PartPreview = () => (
  <PreviewSvg viewBox="0 0 142 163" role="img" aria-label="Contact block preview">
    <g stroke="#0b0b0b">
      <path d="M26 135l-13 2v9l6 3l2-6l5 1v10l9 3l8-3l6-11v-9l-10-4z" fill="#232323" />
      <path d="M104 103l6 2l10-6v-4l9 1v9l-12 5l-11-5z" fill="#222" />
      <path d="M59 134l9 6l15-8v-7l-10 2z" fill="#1d1d1d" />
      <path d="M26 77l70-34l19 7l1 59l-14 5l-56 24l-19-3z" fill="#202020" />
      <path d="M26 77l70-34l20 8l-70 33z" fill="#2b2b2b" />
      <path d="M46 84l70-33v57l-14 4l-56 25z" fill="#252525" />
      <path d="M26 77l20 7v53l-20-10z" fill="#202020" />
      <path d="M31 81l9 3v11l-6-3zM29 101l15-5v12M30 115l16 4M46 84v48M49 117v24M112 86v24M108 87v24" fill="none" />
      <ellipse cx="50" cy="76" rx="9" ry="5" fill="#191919" />
      <ellipse cx="92" cy="54" rx="10" ry="6" fill="#191919" />
    </g>
    <path d="M47 77l6-2M88 54h8" stroke="#777" strokeWidth="1.5" />
    <path d="M62 50l4-2l4 2v11l4-2v-6l5 2v14l-7 2l-10-6z" fill="#175c17" stroke="#0c3a0c" />
  </PreviewSvg>
);

const TreeIcon = ({ kind }) => (
  <svg width="10" height="9" viewBox="0 0 10 9" aria-hidden="true">
    {kind === "book" && (
      <>
        <rect x="1" y="0" width="8" height="9" fill="#2f6fae" />
        <path d="M3.5 2h4v2h-4z" fill="#cfe2f3" />
        <path d="M2.5 0v9" stroke="#1d4c7d" />
      </>
    )}
    {kind === "root" && (
      <>
        <rect x="0.5" y="0.5" width="9" height="8" fill="#d5f0e4" stroke={GREEN} strokeDasharray="2 1" />
        <path d="M3 4.5h4M5 2.5v4" stroke="#207050" />
      </>
    )}
    {kind === "part" && (
      <>
        <rect x="0.5" y="1.5" width="9" height="6" fill="#e6f6ee" stroke="#55b08a" />
        <path d="M2.5 3l2 3M4.5 3l-2 3M6 3l1 1.5l1-1.5M7 4.5v1.5" stroke="#2f8f68" fill="none" strokeWidth="0.8" />
      </>
    )}
  </svg>
);

const EplanMark = () => (
  <>
    <rect width="14" height="14" rx="1" fill="#d3122f" />
    <path d="M4 3h6v8h-6zM6 5.5h2v3h-2z" fill="none" stroke="#fff" strokeWidth="1.3" />
  </>
);

const TASKS = [
  ["Start", <path d="M2 3l4.5-.6v4.1h-4.5zM7 2.3l5.5-.8v5h-5.5zM2 7.2h4.5v4.2l-4.5-.6zM7 7.2h5.5v5l-5.5-.7z" fill="#fff" />],
  ["Task view", <path d="M3 4.5h5v5h-5zM3 2v1M8 2v1M3 11v1.5M8 11v1.5M10.5 2v4M10.5 8v4" fill="none" stroke="#ccc" />],
  ["Edge", <><circle cx="7" cy="7" r="6.5" fill="#1685d6" /><path d="M1 5q4-7 10-2q3 3 1 5h-5q1-3-2-4q-3-1-4 1z" fill="#45d0a0" /><path d="M5 7q1 5 7 4q-6 4-10 0z" fill="#0c4f9c" /></>],
  ["File Explorer", <><path d="M1 2h5l1 2h6v8h-12z" fill="#f0c55a" /><path d="M1 6h12v6h-12z" fill="#f9e29a" /><path d="M4 8h6v4h-6z" fill="#3f93c9" /></>],
  ["Store", <><path d="M1 4h12v9h-12z" fill="#f2f2f2" /><path d="M4.5 4v-3h5v3" fill="none" stroke="#f2f2f2" /><path d="M4 6h2.5v2h-2.5z" fill="#e24a2b" /><path d="M7.5 6h2.5v2h-2.5z" fill="#7ab82c" /><path d="M4 9h2.5v2h-2.5z" fill="#2a8ad0" /><path d="M7.5 9h2.5v2h-2.5z" fill="#f0b020" /></>],
  ["EPLAN", <EplanMark />],
  ["Mail", <><path d="M1 5l6-4l6 4v8h-12z" fill="#1878c4" /><path d="M1 5h12l-6 5z" fill="#d9ecf8" /></>],
  ["EPLAN License", <><rect width="14" height="14" rx="1" fill="#d3122f" /><path d="M5 11v-8h4v4h-3M7 7l3 4M4 12h5" fill="none" stroke="#fff" /></>],
  ["Media", <><circle cx="7" cy="7" r="6" fill="#3a3a3a" /><path d="M4 4h3v6h-3zM8 4q3 3 0 6z" fill="none" stroke="#888" /></>],
  ["Notepad", <><path d="M4 1h9l-3 12h-9z" fill="#b9dbe4" /><path d="M4 4h7M4 6h6M3 8h6" stroke="#5b8f9c" /></>],
  ["Excel", <><path d="M3 1h10v12h-10z" fill="#2a9c62" /><path d="M0 3h8v8h-8z" fill="#126b3c" /><path d="M2 5l4 4M6 5l-4 4" stroke="#fff" /></>],
  ["EPLAN Pro Panel", <EplanMark />],
];

const App = () => {
  const [filter, setFilter] = useState("A1");
  const [selected, setSelected] = useState("SS");

  return (
    <Stage>
      <GlobalStyle />
      <Participant>
        <Avatar>RY</Avatar>
        <NamePlate>Roland Younk</NamePlate>
      </Participant>

      <AppWindow>
        <TitleBar>
          <Logo viewBox="0 0 14 14" aria-hidden="true">
            <EplanMark />
          </Logo>
          <Title>EPLAN Pro Panel 2.9 SP1 Update 4 - D:\Data\Projects\rittal\RICS Rittal Configuration System - A1</Title>
          <WindowButton aria-label="Minimize">
            <svg width="8" height="8"><path d="M1 4.5h6" stroke="#333" /></svg>
          </WindowButton>
          <WindowButton aria-label="Restore">
            <svg width="8" height="8"><path d="M1.5 2.5h4v4h-4zM3 2.5v-1.5h4v4h-1.5" fill="none" stroke="#333" /></svg>
          </WindowButton>
          <WindowButton aria-label="Close">
            <svg width="8" height="8"><path d="M1.5 1.5l5 5M6.5 1.5l-5 5" stroke="#333" /></svg>
          </WindowButton>
        </TitleBar>

        <MenuBar>
          {MENUS.map((menu) => (
            <MenuItem key={menu}>{menu}</MenuItem>
          ))}
        </MenuBar>

        {TOOLBARS.map((row, i) => (
          <ToolRow key={i} $indent={row.indent}>
            {row.bars.map((bar, n) => (
              <React.Fragment key={bar.label}>
                {n > 0 && <Handle $wide={bar.wide} />}
                <ToolBar role="toolbar" aria-label={bar.label} $width={bar.width}>
                  {bar.text ? <ExportText>{bar.text}</ExportText> : <ToolItems items={bar.items} />}
                </ToolBar>
              </React.Fragment>
            ))}
          </ToolRow>
        ))}

        <Workspace>
          <Dock>
            <PanelHeader title="3D mounting layout - RICS Rittal Confi..." />
            <DockTabs>
              {DOCK_TABS.map((tab, i) => (
                <DockTab key={tab} $active={i === 4}>
                  {tab}
                </DockTab>
              ))}
            </DockTabs>
            <FilterForm>
              <Label htmlFor="filter"><u>F</u>ilter:</Label>
              <FilterRow>
                <Select id="filter">
                  <option>Unplaced parts with mounting locatio</option>
                </Select>
                <MoreButton aria-label="Edit filter">...</MoreButton>
              </FilterRow>
              <Label htmlFor="value"><u>V</u>alue: Mounting location &lt;1220&gt; =</Label>
              <ValueInput id="value" value={filter} onChange={(e) => setFilter(e.target.value)} />
            </FilterForm>
            <Tree>
              {TREE.map((node) => (
                <TreeRow key={node.label} $level={node.level} onClick={() => setSelected(node.label)}>
                  <Expander viewBox="0 0 7 7" aria-hidden="true">
                    <path d={node.open ? "M1 1h5v5h-5zM2 3.5h3" : "M1 1h5v5h-5zM2 3.5h3M3.5 2v3"} fill="none" stroke="#8a8a8a" strokeWidth="0.8" />
                  </Expander>
                  <TreeIcon kind={node.kind} />
                  <TreeLabel $selected={selected === node.label}>{node.label}</TreeLabel>
                </TreeRow>
              ))}
            </Tree>
            <TreeTabs>
              <TreeTab $active>Tree</TreeTab>
              <TreeTab>List</TreeTab>
            </TreeTabs>
            <PanelHeader title="Graphical preview" />
            <Preview>
              <PartPreview />
            </Preview>
          </Dock>

          <Editor>
            <DocTabs>
              <DocTab>EPLAN Tutorials</DocTab>
              <DocTab $active>
                A1 <CloseBox />
              </DocTab>
              <DocTab>=600V+A1/06</DocTab>
              <TabMenu aria-label="Open documents">
                <svg width="6" height="4"><path d="M0 0h6l-3 4z" fill="#111" /></svg>
              </TabMenu>
            </DocTabs>
            <Viewport>
              <PanelDrawing />
            </Viewport>
          </Editor>

          <SideBar role="toolbar" aria-label="Graphics">
            <ToolItems items={SIDE_TOOLS} vertical />
          </SideBar>
        </Workspace>

        <StatusBar>
          <StatusCell $dark>Set viewpoint to southeast isometric</StatusCell>
          <StatusCell>Mounting panel: =600V+A1-1Part number:</StatusCell>
          <StatusCell>ON: 10,00 mm</StatusCell>
          <StatusCell>Graphic 1:1</StatusCell>
          <svg width="8" height="8" aria-hidden="true">
            <circle cx="4" cy="4" r="4" fill="#c8423c" />
            <path d="M1.5 4h5" stroke="#fff" strokeWidth="1.5" />
          </svg>
        </StatusBar>

        <TaskBar>
          <Tasks>
            {TASKS.map(([name, art]) => (
              <TaskButton key={name} aria-label={name} $active={name === "EPLAN Pro Panel"}>
                <svg width="14" height="14" viewBox="0 0 14 14">{art}</svg>
              </TaskButton>
            ))}
          </Tasks>
          <Tray>
            <svg width="94" height="12" viewBox="0 0 94 12" fill="none" stroke="#ddd" aria-hidden="true">
              <path d="M1 10l3-4M3 5a2 2 0 1 1 2 0M5 5l3 2v3M8 2.5a1.5 1.5 0 1 0 .1 0" />
              <path d="M22 7l3-3l3 3" />
              <path d="M36 4h6v4h-6z" fill="#ddd" />
              <path d="M49 9a6 6 0 0 1 6-6M51 9a4 4 0 0 1 4-4M53 9a2 2 0 0 1 2-2" />
              <path d="M62 5h2l2-2v6l-2-2h-2zM68 5l2 2M70 5l-2 2" />
              <path d="M79 9l2-4l4-3l1 2l-4 4zM77 8q2 4 5 1" />
            </svg>
            <Lang>ENG</Lang>
            <Clock>
              <span>11:46</span>
              <span>2020-12-10</span>
            </Clock>
            <svg width="14" height="13" viewBox="0 0 14 13" aria-hidden="true">
              <path d="M1 1h9v7h-5l-2 2v-2h-2z" fill="#f4f4f4" />
              <path d="M3 3h5M3 5h5" stroke="#222" />
              <circle cx="9.5" cy="8.5" r="3.5" fill="#555" stroke="#bbb" strokeWidth="0.7" />
              <text x="8" y="11" fontSize="6" fill="#fff">9</text>
            </svg>
          </Tray>
        </TaskBar>
      </AppWindow>

      <Cursor viewBox="0 0 9 13" aria-hidden="true">
        <path d="M.5 .5v10l2.5-2l2 4l1.5-1l-2-3.5h3.5z" fill="#fff" stroke="#333" strokeWidth="0.8" />
      </Cursor>
    </Stage>
  );
};

const PanelHeader = ({ title }) => (
  <DockHeader>
    <DockTitle>{title}</DockTitle>
    <HeaderButton aria-label="Menu">
      <svg width="6" height="4"><path d="M0 0h6l-3 4z" fill="#222" /></svg>
    </HeaderButton>
    <HeaderButton aria-label="Pin">
      <svg width="5" height="6"><path d="M1 3.5h3.5M1.5 3.5v-3h2v3M2.5 4v2" fill="none" stroke="#222" /></svg>
    </HeaderButton>
    <HeaderButton aria-label="Close">
      <CloseBox />
    </HeaderButton>
  </DockHeader>
);

const CloseBox = () => (
  <svg width="7" height="7" aria-hidden="true">
    <rect width="7" height="7" fill="#d0444c" />
    <path d="M2 2l3 3M5 2l-3 3" stroke="#fff" />
  </svg>
);

const GlobalStyle = createGlobalStyle`
  * {
    box-sizing: border-box;
  }

  body {
    margin: 0;
    background: #333333;
    font-family: "Noto Sans", "Open Sans", sans-serif;
    font-size: 6px;
    line-height: 10px;
    color: #222;
  }

  button {
    font: inherit;
    color: inherit;
    padding: 0;
    border: 0;
    background: transparent;
    cursor: pointer;
  }

  svg {
    display: block;
    flex: none;
  }
`;

const Stage = styled.div`
  display: flex;
  flex-direction: column;
  min-height: 100vh;
  padding: 0 102px 1px 101px;
  position: relative;
`;

const Participant = styled.div`
  align-self: center;
  display: flex;
  flex-direction: column;
  align-items: center;
  justify-content: space-between;
  width: 204px;
  height: 115px;
  padding: 22px 6px 1px;
  background: #ebebeb;
`;

const Avatar = styled.div`
  display: grid;
  place-items: center;
  width: 50px;
  height: 50px;
  border: 1px solid #d2d2d2;
  border-radius: 50%;
  background: #fff;
  color: #3fa78c;
  font-family: "Open Sans", sans-serif;
  font-size: 22px;
  font-weight: 500;
  line-height: 28px;
`;

const NamePlate = styled.div`
  align-self: stretch;
  height: 27px;
  padding-left: 11px;
  background: #4b4b4b;
  color: #fff;
  font-family: "Open Sans", sans-serif;
  font-size: 13px;
  line-height: 27px;
`;

const AppWindow = styled.div`
  flex: 1;
  display: flex;
  flex-direction: column;
  background: #fff;
  border-top: 1px solid #7a2a22;
  border-right: 1px solid #c8552c;
`;

const TitleBar = styled.header`
  display: flex;
  align-items: center;
  height: 11px;
  padding: 0 1px;
`;

const Logo = styled.svg`
  width: 8px;
  height: 8px;
`;

const Title = styled.span`
  flex: 1;
  padding-left: 3px;
  white-space: nowrap;
`;

const WindowButton = styled.button`
  display: grid;
  place-items: center;
  width: 26px;
`;

const MenuBar = styled.nav`
  display: flex;
  gap: 9px;
  height: 14px;
  padding-left: 8px;
  border-bottom: 1px solid #e2e2e2;
`;

const MenuItem = styled.button`
  line-height: 14px;
`;

const ToolRow = styled.div`
  display: flex;
  height: 16px;
  padding-left: ${(props) => props.$indent}px;
  border-bottom: 1px solid #e0e0e0;
`;

const ToolBar = styled.div`
  display: flex;
  align-items: center;
  flex: 0 0 ${(props) => props.$width}px;
  border-right: 1px solid #cfcfcf;
`;

const Handle = styled.div`
  flex: none;
  width: ${(props) => (props.$wide ? 15 : 7)}px;
  margin: 2px 0;
  background: radial-gradient(circle, #c8c8c8 1px, transparent 1px) right 2px top / 2px 3px repeat-y;
`;

const ToolButton = styled.button`
  flex: 134 1 0;
  display: grid;
  place-items: center;
  min-height: 0;
  min-width: 0;
  padding: ${(props) => (props.$active ? "2px 0" : "0")};
  background: ${(props) => (props.$active ? "#cfe4f7" : "transparent")};
`;

const Separator = styled.div`
  flex: 46 1 0;
  height: ${(props) => (props.$vertical ? "auto" : "12px")};
  width: 11px;
  background: ${(props) =>
    props.$vertical
      ? "linear-gradient(#ccc, #ccc) center / 100% 1px no-repeat"
      : "linear-gradient(#ccc, #ccc) center / 1px 100% no-repeat"};
`;

const GlyphSvg = styled.svg`
  width: 10px;
  height: 10px;
  overflow: visible;
`;

const ExportText = styled.span`
  padding-left: 2px;
  white-space: nowrap;
`;

const Workspace = styled.main`
  flex: 1;
  display: flex;
  min-height: 0;
  background: #f0f0f2;
`;

const Dock = styled.aside`
  display: flex;
  flex-direction: column;
  width: 150px;
  background: #f2f2f2;
`;

const DockHeader = styled.div`
  display: flex;
  align-items: center;
  flex: none;
  height: 11px;
  padding: 0 1px;
  background: linear-gradient(#d5e0ef, #bccfe4);
`;

const DockTitle = styled.span`
  flex: 1;
  white-space: nowrap;
`;

const HeaderButton = styled.button`
  display: grid;
  place-items: center;
  width: 10px;
`;

const DockTabs = styled.div`
  display: flex;
  flex: none;
  height: 14px;
  padding: 2px 2px 0;
  margin-bottom: 3px;
  border-bottom: 1px solid #ddd;
`;

const DockTab = styled.button`
  flex: 1;
  border-right: 1px solid ${(props) => (props.$active ? "#666" : "#bbb")};
  color: ${(props) => (props.$active ? "#222" : "#999")};
  white-space: nowrap;
`;

const FilterForm = styled.form`
  display: flex;
  flex-direction: column;
  padding: 1px 4px 0 2px;
`;

const Label = styled.label`
  height: 11px;
  line-height: 10px;
`;

const FilterRow = styled.div`
  display: flex;
  justify-content: space-between;
  gap: 6px;
  height: 12px;
  margin-bottom: 4px;
`;

const Select = styled.select`
  flex: 1;
  min-width: 0;
  padding: 0 8px 0 2px;
  border: 1px solid #b5b5b5;
  appearance: none;
  background: url("data:image/svg+xml,%3Csvg xmlns='http://www.w3.org/2000/svg' width='5' height='4'%3E%3Cpath d='M0 0l2.5 3L5 0' fill='none' stroke='%23555'/%3E%3C/svg%3E")
    right 2px center no-repeat #e4e4e4;
  color: inherit;
  font: inherit;
`;

const MoreButton = styled.button`
  width: 13px;
  border: 1px solid #b5b5b5;
  background: #e6e6e6;
  line-height: 8px;
`;

const ValueInput = styled.input`
  height: 11px;
  padding: 0 1px;
  border: 1px solid #8c8c8c;
  background: #fff;
  color: inherit;
  font: inherit;
`;

const Tree = styled.ul`
  flex: 1;
  margin: 6px 3px 0 2px;
  padding: 0;
  border: 1px solid #a8a8a8;
  background: #fff;
  list-style: none;
`;

const TreeRow = styled.li`
  display: flex;
  align-items: center;
  height: 10px;
  padding: 0 1px 0 ${(props) => 2 + props.$level * 11}px;
  cursor: pointer;
`;

const Expander = styled.svg`
  width: 7px;
  height: 7px;
  margin-right: 3px;
`;

const TreeLabel = styled.span`
  flex: 1;
  padding-left: 3px;
  background: ${(props) => (props.$selected ? "#e8e8e8" : "transparent")};
`;

const TreeTabs = styled.div`
  display: flex;
  flex: none;
  height: 14px;
  margin-bottom: 4px;
  padding-left: 2px;
`;

const TreeTab = styled.button`
  width: 19px;
  border-right: 1px solid #888;
  border-bottom: ${(props) => (props.$active ? "1px solid #888" : "0")};
  background: ${(props) => (props.$active ? "#fff" : "transparent")};
  color: ${(props) => (props.$active ? "#222" : "#aaa")};
`;

const Preview = styled.div`
  flex: none;
  height: 191px;
  padding: 1px 4px 0 3px;
  border-bottom: 1px solid #bbb;
  background: #fff;
`;

const PreviewSvg = styled.svg`
  width: 100%;
  background: linear-gradient(#fff 15%, #c9c9c9);
`;

const Editor = styled.section`
  flex: 1;
  display: flex;
  flex-direction: column;
  min-width: 0;
  margin: 0 2px 0 4px;
  padding-bottom: 3px;
`;

const DocTabs = styled.div`
  display: flex;
  flex: none;
  height: 11px;
  padding-left: 9px;
`;

const DocTab = styled.button`
  display: flex;
  align-items: center;
  gap: 6px;
  padding: 0 6px;
  background: ${(props) => (props.$active ? "#dfe8f5" : "#c5d5ec")};
  font-weight: ${(props) => (props.$active ? 700 : 400)};
  white-space: nowrap;
`;

const TabMenu = styled.button`
  margin-left: auto;
  width: 12px;
`;

const Viewport = styled.div`
  flex: 1;
  min-height: 0;
  border: 1px solid #9a9da6;
  background: linear-gradient(#fff, #f4f4f4 15%, #c0c0c0);
`;

const DrawingSvg = styled.svg`
  width: 100%;
  height: 100%;
`;

const SideBar = styled.div`
  display: flex;
  flex-direction: column;
  align-items: center;
  width: 17px;
  height: 497px;
  padding: 5px 3px 0 0;
  border-left: 1px solid #ddd;
  background: #fafafa;
`;

const StatusBar = styled.footer`
  display: grid;
  grid-template-columns: 531fr 273fr 123fr 116fr 29fr;
  align-items: center;
  flex: none;
  height: 12px;
  padding-left: 2px;
  background: #f2f2f4;
`;

const StatusCell = styled.span`
  color: ${(props) => (props.$dark ? "#222" : "#777")};
  white-space: nowrap;
`;

const TaskBar = styled.div`
  display: flex;
  align-items: center;
  justify-content: space-between;
  flex: none;
  height: 21px;
  padding: 0 9px 0 5px;
  background: #050505;
  color: #eee;
`;

const Tasks = styled.div`
  display: flex;
  justify-content: space-between;
  width: 318px;
`;

const TaskButton = styled.button`
  display: grid;
  place-items: center;
  width: 14px;
  height: 21px;
  box-shadow: ${(props) => (props.$active ? "0 0 0 6px #3c3c3c" : "none")};
  background: ${(props) => (props.$active ? "#3c3c3c" : "transparent")};
  clip-path: inset(0 -6px);
`;

const Tray = styled.div`
  display: flex;
  align-items: center;
`;

const Lang = styled.span`
  width: 20px;
`;

const Clock = styled.div`
  display: flex;
  flex-direction: column;
  align-items: center;
  width: 48px;
  padding-right: 4px;
`;

const Cursor = styled.svg`
  position: absolute;
  left: 635px;
  top: 182px;
  width: 9px;
  height: 13px;
`;

export default App;
